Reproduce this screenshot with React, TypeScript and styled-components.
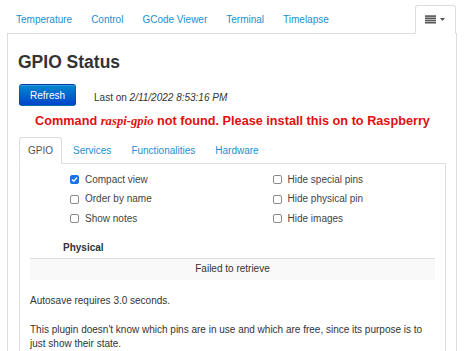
import React from 'react';
import styled, { createGlobalStyle } from 'styled-components';

const GlobalStyle = createGlobalStyle`
  body {
    margin: 0;
    background: #fff;
    font-family: "Liberation Sans", Arial, sans-serif;
    font-size: 10px;
    line-height: 14.5px;
    color: #333;
  }
`;

const Page = styled.div`
  padding: 0 17px 0 7px;
`;

const TopNav = styled.ul`
  display: flex;
  margin: 0;
  padding: 0;
  list-style: none;
  height: 33px;
  border-bottom: 1px solid #ddd;
`;

const TopItem = styled.li<{ $right?: boolean }>`
  margin-left: ${p => (p.$right ? 'auto' : '0')};
  margin-right: ${p => (p.$right ? '1px' : '0')};
`;

const TopLink = styled.a`
  display: block;
  padding: 13px 10px 0 10px;
  margin-left: -1px;
  color: #1a8fd0;
  text-decoration: none;
  line-height: 14px;
`;

const MenuTab = styled.a`
  display: flex;
  align-items: center;
  gap: 4px;
  box-sizing: border-box;
  margin-top: 5px;
  height: 29px;
  padding: 0 10px 0 9px;
  border: 1px solid #ddd;
  border-bottom-color: #fff;
  border-radius: 3px 3px 0 0;
  background: #fff;
`;

const Panel = styled.div`
  border: 1px solid #ddd;
  border-top: none;
  padding: 18px 10px 0 11px;
`;

const Heading = styled.h1`
  margin: 0 0 12px -1px;
  font-size: 17.5px;
  line-height: 20px;
  font-weight: bold;
  color: #333;
`;

const ActionRow = styled.div`
  display: flex;
  align-items: center;
`;

const PrimaryButton = styled.button`
  box-sizing: border-box;
  height: 22px;
  padding: 0 10px;
  font-family: inherit;
  font-size: 10px;
  color: #fff;
  border: 1px solid rgba(0, 0, 0, 0.15);
  border-radius: 3px;
  background: linear-gradient(#0088cc, #0044cc);
  box-shadow: inset 0 1px 0 rgba(255, 255, 255, 0.2);
`;

const LastOn = styled.span`
  margin-left: 18px;
  padding-top: 7px;
`;

const ErrorLine = styled.div`
  margin-top: 7px;
  text-align: center;
  color: #e10f0f;
  font-weight: bold;
  font-size: 12.7px;
  line-height: 16px;
`;

const Cmd = styled.i`
  font-family: "Liberation Serif", "Times New Roman", serif;
`;

const SubNav = styled.ul`
  display: flex;
  margin: 8px 0 0 0;
  padding: 0;
  list-style: none;
  height: 26px;
  border-bottom: 1px solid #ddd;
`;

const SubTab = styled.li<{ $active?: boolean }>`
  box-sizing: border-box;
  height: 27px;
  margin-right: 2px;
  padding: 0 8px;
  line-height: 26px;
  border: 1px solid ${p => (p.$active ? '#ddd' : 'transparent')};
  border-bottom-color: ${p => (p.$active ? '#fff' : 'transparent')};
  border-radius: 3px 3px 0 0;
  background: ${p => (p.$active ? '#fff' : 'transparent')};
  color: ${p => (p.$active ? '#555' : '#1a8fd0')};
`;

const TabContent = styled.div`
  border-left: 1px solid #ddd;
  border-right: 1px solid #ddd;
  padding: 6px 10px 0 10px;
`;

const OptionGrid = styled.div`
  display: grid;
  grid-template-columns: 1fr 1fr;
`;

const Option = styled.label`
  display: flex;
  align-items: center;
  gap: 6px;
  height: 19.5px;
  padding-left: 40px;
  color: #444;
`;

const Box = styled.span<{ $checked?: boolean }>`
  box-sizing: border-box;
  display: inline-flex;
  align-items: center;
  justify-content: center;
  width: 9px;
  height: 9px;
  border-radius: 2px;
  border: 1px solid ${p => (p.$checked ? '#1a73e8' : '#8a8a8a')};
  background: ${p => (p.$checked ? '#1a73e8' : '#fff')};
`;

const Table = styled.table`
  width: 100%;
  margin-top: 9px;
  border-collapse: collapse;
`;

const HeadCell = styled.th`
  padding: 3px 0 3px 33px;
  text-align: left;
  font-weight: bold;
  line-height: 14px;
`;

const BodyCell = styled.td`
  padding: 3.5px 0;
  text-align: center;
  line-height: 14px;
  background: #f9f9f9;
  border-top: 1px solid #ddd;
`;

const Note = styled.p<{ $gapAbove?: number }>`
  margin: ${p => p.$gapAbove ?? 0}px 0 14.5px 0;
`;

const MenuIcon = () => (
  <svg width="11" height="9" viewBox="0 0 11 9">
    {[0.3, 2.5, 4.7, 6.9].map(y => (
      <rect key={y} x="0" y={y} width="11" height="1.6" fill="#555" />
    ))}
  </svg>
);

const Caret = () => (
  <svg width="5" height="3" viewBox="0 0 5 3">
    <polygon points="0,0 5,0 2.5,3" fill="#555" />
  </svg>
);

const Check = () => (
  <svg width="7" height="7" viewBox="0 0 7 7">
    <polyline points="1,3.6 2.8,5.3 6,1.6" fill="none" stroke="#fff" strokeWidth="1.4" />
  </svg>
);

const options = [
  { label: 'Compact view', checked: true },
  { label: 'Hide special pins', checked: false },
  { label: 'Order by name', checked: false },
  { label: 'Hide physical pin', checked: false },
  { label: 'Show notes', checked: false },
  { label: 'Hide images', checked: false },
];

const App: React.FC = () => {
  return (
    <>
      <GlobalStyle />
      <Page>
        <TopNav>
          {['Temperature', 'Control', 'GCode Viewer', 'Terminal', 'Timelapse'].map(t => (
            <TopItem key={t}>
              <TopLink>{t}</TopLink>
            </TopItem>
          ))}
          <TopItem $right>
            <MenuTab>
              <MenuIcon />
              <Caret />
            </MenuTab>
          </TopItem>
        </TopNav>

        <Panel>
          <Heading>GPIO Status</Heading>
          <ActionRow>
            <PrimaryButton>Refresh</PrimaryButton>
            <LastOn>
              Last on <i>2/11/2022 8:53:16 PM</i>
            </LastOn>
          </ActionRow>
          <ErrorLine>
            Command <Cmd>raspi-gpio</Cmd> not found. Please install this on to Raspberry
          </ErrorLine>

          <SubNav>
            <SubTab $active>GPIO</SubTab>
            <SubTab>Services</SubTab>
            <SubTab>Functionalities</SubTab>
            <SubTab>Hardware</SubTab>
          </SubNav>
          <TabContent>
            <OptionGrid>
              {options.map(o => (
                <Option key={o.label}>
                  <Box $checked={o.checked}>{o.checked && <Check />}</Box>
                  {o.label}
                </Option>
              ))}
            </OptionGrid>
            <Table>
              <thead>
                <tr>
                  <HeadCell>Physical</HeadCell>
                </tr>
              </thead>
              <tbody>
                <tr>
                  <BodyCell>Failed to retrieve</BodyCell>
                </tr>
              </tbody>
            </Table>
            <Note $gapAbove={14}>Autosave requires 3.0 seconds.</Note>
            <Note>
              This plugin doesn't know which pins are in use and which are free, since its purpose is to
              just show their state.
            </Note>
          </TabContent>
        </Panel>
      </Page>
    </>
  );
};

export default App;
